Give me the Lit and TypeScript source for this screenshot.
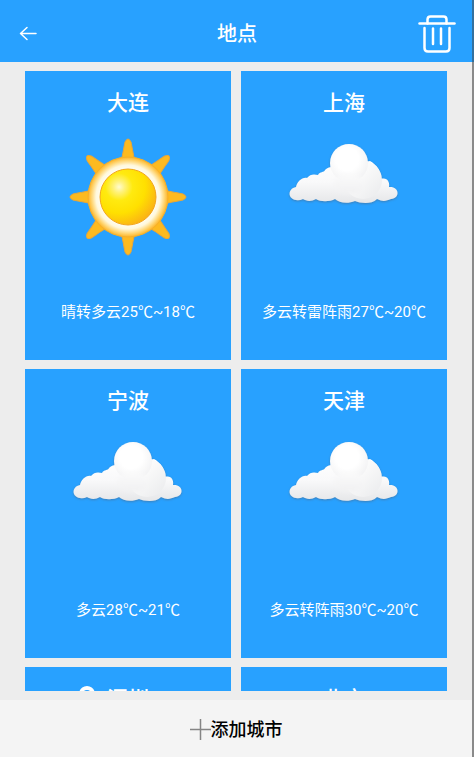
import { LitElement, html, css, svg, nothing } from "lit";
import { customElement, property } from "lit/decorators.js";

interface Place {
  city: string;
  icon: "sun" | "cloud" | "none";
  forecast: string;
  current?: boolean;
}

const places: Place[] = [
  { city: "大连", icon: "sun", forecast: "晴转多云25℃~18℃" },
  { city: "上海", icon: "cloud", forecast: "多云转雷阵雨27℃~20℃" },
  { city: "宁波", icon: "cloud", forecast: "多云28℃~21℃" },
  { city: "天津", icon: "cloud", forecast: "多云转阵雨30℃~20℃" },
  { city: "深圳", icon: "none", forecast: "", current: true },
  { city: "北京", icon: "none", forecast: "" },
];

const rays = [0, 45, 90, 135, 180, 225, 270, 315];

const sun = html`
  <svg class="art" viewBox="0 0 120 120" aria-hidden="true">
    <defs>
      <radialGradient id="core" cx="0.34" cy="0.32" r="0.72">
        <stop offset="0" stop-color="#fffbd0" />
        <stop offset="0.14" stop-color="#fff27a" />
        <stop offset="0.34" stop-color="#ffea10" />
        <stop offset="0.65" stop-color="#ffe000" />
        <stop offset="1" stop-color="#fbb414" />
      </radialGradient>
      <radialGradient id="halo">
        <stop offset="0.7" stop-color="#fffdf0" />
        <stop offset="0.8" stop-color="#fff8dc" />
        <stop offset="0.91" stop-color="#ffd673" />
        <stop offset="1" stop-color="#fdb425" />
      </radialGradient>
    </defs>
    ${rays.map(
      (a) => svg`<path d="M53 24 C55 17 56 9 57 5 Q60 -1 63 5 C64 9 65 17 67 24 Z"
        fill="#fdba20" stroke="#eda634" stroke-width="1" transform="rotate(${a} 60 60)" />`
    )}
    <circle cx="60" cy="60" r="40" fill="url(#halo)" stroke="#f7b02a" stroke-width="1" />
    <circle cx="60" cy="60" r="28" fill="url(#core)" stroke="#f2a51c" stroke-width="1" />
  </svg>
`;

const cloud = html`
  <svg class="art" viewBox="0 0 120 120" aria-hidden="true">
    <defs>
      <linearGradient id="body" x1="0" y1="0" x2="0" y2="1">
        <stop offset="0" stop-color="#ffffff" />
        <stop offset="0.5" stop-color="#f9f9fa" />
        <stop offset="1" stop-color="#e6e7e9" />
      </linearGradient>
      <radialGradient id="puff" cx="0.45" cy="0.4" r="0.6">
        <stop offset="0.5" stop-color="#ffffff" />
        <stop offset="1" stop-color="#f3f3f4" />
      </radialGradient>
      <linearGradient id="shoulder" x1="0" y1="0" x2="1" y2="1">
        <stop offset="0.4" stop-color="#fafafa" />
        <stop offset="1" stop-color="#e9eaec" />
      </linearGradient>
      <linearGradient id="blend" x1="0" y1="0" x2="0" y2="1">
        <stop offset="0" stop-color="#fbfbfb" />
        <stop offset="1" stop-color="#f0f0f1" />
      </linearGradient>
      <filter id="soft" x="-20%" y="-20%" width="140%" height="140%">
        <feGaussianBlur stdDeviation="2" />
      </filter>
      <filter id="shade" x="-10%" y="-10%" width="120%" height="130%">
        <feDropShadow dx="0" dy="1" stdDeviation="1" flood-color="#466a8c" flood-opacity="0.6" />
      </filter>
    </defs>
    <g filter="url(#shade)">
      <path
        d="M12 63 C4 62 3 52 12 50 C13 45 18 40 23 41 C26 37 30 37 34 38 C36 34 40 36 41 33
           C44 30 48 29 52 31 L86 24 C93 28 97 34 97 42 C103 40 106 45 105 50 C115 49 117 61 107 62
           C102 64 99 65 93 62 C87 68 76 66 71 64 C64 67 55 66 51 62 C46 65 36 65 32 62
           C27 65 22 64 19 62 Q15 64 12 63 Z"
        fill="url(#body)"
      />
      <circle cx="79" cy="43" r="19" fill="url(#shoulder)" />
      <circle cx="65" cy="26" r="19" fill="url(#puff)" />
      <ellipse cx="65" cy="47" rx="16" ry="10" fill="url(#blend)" filter="url(#soft)" />
    </g>
  </svg>
`;

@customElement("place-card")
export class PlaceCard extends LitElement {
  @property({ attribute: false }) place!: Place;

  static styles = css`
    :host {
      display: flex;
      flex-direction: column;
      align-items: center;
      box-sizing: border-box;
      min-height: 289px;
      padding-top: 16px;
      background: #28a1ff;
      color: #fff;
    }
    .city {
      position: relative;
      margin: 0;
      font-size: 21px;
      line-height: 32px;
      font-weight: 500;
    }
    .pin {
      position: absolute;
      right: 100%;
      top: 2px;
      margin-right: 10px;
      width: 20px;
      height: 24px;
    }
    .art {
      display: block;
      width: 120px;
      height: 120px;
      margin-top: 18px;
    }
    .forecast {
      margin: 43px 0 0;
      font-size: 15px;
      line-height: 24px;
      white-space: nowrap;
    }
  `;

  render() {
    const { city, icon, forecast, current } = this.place;
    return html`
      <h2 class="city">
        ${current
          ? html`<svg class="pin" viewBox="0 0 20 24" aria-hidden="true">
              <path
                d="M10 1 C5 1 2 5 2 9 C2 14 10 23 10 23 C10 23 18 14 18 9 C18 5 15 1 10 1 Z M10 5 a4 4 0 1 1 0 8 a4 4 0 1 1 0 -8 Z"
                fill="#fff"
                fill-rule="evenodd"
              />
            </svg>`
          : nothing}${city}
      </h2>
      ${icon === "sun" ? sun : icon === "cloud" ? cloud : nothing}
      ${forecast ? html`<p class="forecast">${forecast}</p>` : nothing}
    `;
  }
}

@customElement("app-root")
export class AppRoot extends LitElement {
  static styles = css`
    :host {
      display: flex;
      flex-direction: column;
      height: 100vh;
      background: #ededed;
      font-family: Roboto, "Noto Sans CJK SC", sans-serif;
    }
    button {
      margin: 0;
      padding: 0;
      border: 0;
      background: none;
      color: inherit;
      font: inherit;
      cursor: pointer;
    }
    svg {
      display: block;
    }
    .bar {
      flex: none;
      display: grid;
      grid-template-columns: 1fr auto 1fr;
      align-items: center;
      height: 62px;
      padding: 5px 16px 0 18px;
      box-sizing: border-box;
      border-right: 2px solid #33709e;
      background: #28a1ff;
      color: #fff;
    }
    .title {
      margin: 0;
      font-size: 20px;
      line-height: 30px;
      font-weight: 500;
    }
    .trash {
      justify-self: end;
    }
    .body {
      flex: 1;
      min-height: 0;
      display: flex;
      padding: 9px 25px;
      border-right: 2px solid #8a8a8a;
    }
    .places {
      flex: 1;
      overflow: hidden;
      display: grid;
      grid-template-columns: 1fr 1fr;
      grid-auto-rows: max-content;
      gap: 9px 10px;
    }
    .footer {
      flex: none;
      display: flex;
      border-right: 2px solid #8a8a8a;
      background: #f4f4f4;
    }
    .add {
      flex: 1;
      display: flex;
      align-items: center;
      justify-content: center;
      height: 57px;
      padding-top: 2px;
      color: #000;
      font-size: 18px;
      line-height: 28px;
      font-weight: 500;
    }
  `;

  render() {
    return html`
      <header class="bar">
        <button class="back" aria-label="返回">
          <svg width="20" height="20" viewBox="0 0 20 20" fill="none" stroke="#fff" stroke-width="1.5" stroke-linecap="round" stroke-linejoin="round">
            <path d="M18 9.500 H2.500 M9 3.500 L2.500 9.500 L9 15.500" />
          </svg>
        </button>
        <h1 class="title">地点</h1>
        <button class="trash" aria-label="删除">
          <svg width="38" height="40" viewBox="0 0 38 40" fill="none" stroke="#fff" stroke-width="2.500" stroke-linecap="round" stroke-linejoin="round">
            <path d="M1.500 9.500 H36.500" />
            <path d="M9.500 9.500 V5.500 Q9.500 2.500 12.500 2.500 H25.500 Q28.500 2.500 28.500 5.500 V9.500" />
            <path d="M6.500 14 V34 Q6.500 37.500 10 37.500 H28 Q31.500 37.500 31.500 34 V14" />
            <path d="M15 14.500 V30 M23 14.500 V30" />
          </svg>
        </button>
      </header>
      <main class="body">
        <div class="places">
          ${places.map((p) => html`<place-card .place=${p}></place-card>`)}
        </div>
      </main>
      <footer class="footer">
        <button class="add">
          <svg width="21" height="21" viewBox="0 0 21 21" stroke="#858585" stroke-width="1.5" aria-hidden="true">
            <path d="M0 10.500 H21 M10.500 0 V21" />
          </svg>
          <span>添加城市</span>
        </button>
      </footer>
    `;
  }
}
